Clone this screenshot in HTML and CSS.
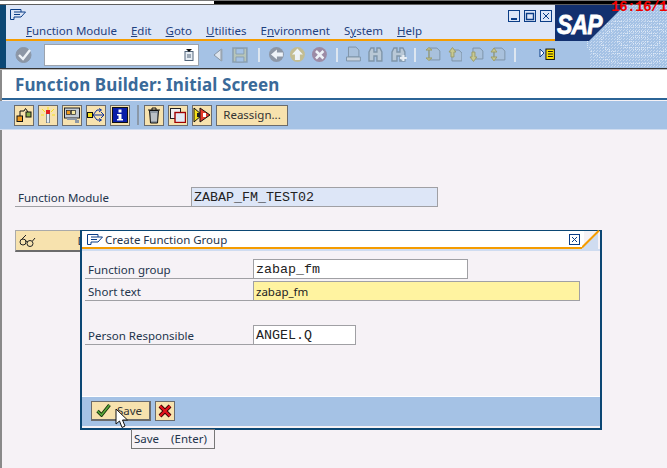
FILE: index.html
```html
<!DOCTYPE html>
<html lang="en">
<head>
<meta charset="utf-8">
<title>Function Builder</title>
<link rel="stylesheet" href="styles.css">
</head>
<body>
<div class="shell">
  <div class="topstrip"></div>
  <header class="header">
    <div class="edge"></div>
    <div class="headmain">
      <div class="menubar">
        <div class="syslogo">
          <svg width="16" height="11" viewBox="0 0 16 11"><path d="M.5.5H11V3H15.5L11 8H4V10.5H.5Z M4 3H11M4 5.5H10" fill="none" stroke="#0a3d86"/></svg>
        </div>
        <nav class="menus">
          <span><u>F</u>unction Module</span><span><u>E</u>dit</span><span><u>G</u>oto</span><span><u>U</u>tilities</span><span>E<u>n</u>vironment</span><span>S<u>y</u>stem</span><span><u>H</u>elp</span>
        </nav>
        <div class="winbtns">
          <span class="winbtn"><svg width="12" height="12" viewBox="0 0 12 12"><path d="M3 9H9" stroke="#0a3d86" stroke-width="2"/></svg></span>
          <span class="winbtn"><svg width="12" height="12" viewBox="0 0 12 12"><path d="M2.5 3.5H9.5V9.5H2.5Z" fill="none" stroke="#0a3d86" stroke-width="1.4"/></svg></span>
          <span class="winbtn"><svg width="12" height="12" viewBox="0 0 12 12"><path d="M3 3L9 9M9 3L3 9" stroke="#0a3d86"/></svg></span>
        </div>
      </div>
      <div class="systoolbar">
        <svg class="t-check" width="18" height="18" viewBox="0 0 18 18"><circle cx="8.5" cy="9" r="7.5" fill="#8d97a6" stroke="#8a97a8"/><path d="M4 9L8 13L15 4" fill="none" stroke="#eef3f8" stroke-width="2.4"/></svg>
        <div class="cmdfield">
          <svg width="10" height="12" viewBox="0 0 10 12"><rect x="1" y="2.5" width="8" height="9" fill="#e8eef4" stroke="#52657a"/><path d="M2 0H8L5 3Z" fill="#111"/><path d="M3 6H7M3 8H7" stroke="#52657a"/></svg>
        </div>
        <svg class="t-tri" width="10" height="14" viewBox="0 0 10 14"><path d="M8.5 1V13L1 7Z" fill="#dfe6ee" stroke="#8795a5"/><path d="M8.5 1V13" stroke="#9aa6b2" stroke-width="2"/></svg>
        <svg class="t-save" width="16" height="16" viewBox="0 0 16 16"><path d="M1 1H15V15H1Z" fill="#b7c5b9" stroke="#8aa0b2" stroke-width="1.6"/><path d="M4 1.5H12V7H4ZM4 10H12V15H4Z" fill="#a5c2e5" stroke="#8aa0b2"/></svg>
        <i class="sep"></i>
        <svg class="t-circ" width="17" height="17" viewBox="0 0 17 17"><circle cx="8.5" cy="8.5" r="7.5" fill="#8d97a6"/><path d="M3 8.5L9 3.5V6.5H15V10.5H9V13.5Z" fill="#eef3f8"/></svg>
        <svg class="t-circ" width="17" height="17" viewBox="0 0 17 17"><circle cx="8.5" cy="8.5" r="7.5" fill="#c3bd92"/><path d="M8.5 2.5L14 8.5H11V14H6V8.5H3Z" fill="#eef3f8"/></svg>
        <svg class="t-circ" width="17" height="17" viewBox="0 0 17 17"><circle cx="8.5" cy="8.5" r="7.5" fill="#9c8ba5"/><path d="M5 5L12.5 12.5M12.5 5L5 12.5" stroke="#eef3f8" stroke-width="2.6"/></svg>
        <i class="sep sep2"></i>
        <svg class="t-print" width="15" height="17" viewBox="0 0 15 17"><path d="M2.5 1H10L13 4V11H2.5Z" fill="#a9c1dc" stroke="#7f95a9"/><path d="M.5 11H14.500V15H.5Z" fill="#c6d0db" stroke="#7f95a9"/></svg>
        <svg class="t-find" width="15" height="15" viewBox="0 0 15 15"><path d="M1 5L3 1H6V5H9V1H12L14 5V14H9V9H6V14H1Z" fill="#b9c8d6" stroke="#7f95a9" stroke-width="1.4"/></svg>
        <svg class="t-findn" width="16" height="15" viewBox="0 0 16 15"><path d="M1 5L3 1H6V5H9V1H12L14 5V14H9V9H6V14H1Z" fill="#b9c8d6" stroke="#7f95a9" stroke-width="1.4"/><path d="M9 11H16M12.500 8V14" stroke="#e8eef4" stroke-width="2.2"/></svg>
        <i class="sep sep3"></i>
        <svg class="t-page" width="16" height="15" viewBox="0 0 16 15"><path d="M4 1H12L15 4V13H4Z" fill="#a9c1dc" stroke="#7f95a9"/><path d="M1 3L4 0.500L7 3H1ZM1 11L4 13.500L7 11H1Z M4 3V11" fill="#c8c98f" stroke="#9b9d6c"/></svg>
        <svg class="t-page2" width="15" height="15" viewBox="0 0 15 15"><path d="M4 3H11L14 6V14H4Z" fill="#a9c1dc" stroke="#7f95a9"/><path d="M1 5L4.500 0.500L8 5H6V10H3V5Z" fill="#c8c98f" stroke="#9b9d6c"/></svg>
        <svg class="t-page3" width="15" height="15" viewBox="0 0 15 15"><path d="M4 1H11L14 4V12H4Z" fill="#a9c1dc" stroke="#7f95a9"/><path d="M1 10L4.500 14.500L8 10H6V5H3V10Z" fill="#c8c98f" stroke="#9b9d6c"/></svg>
        <svg class="t-page4" width="16" height="15" viewBox="0 0 16 15"><path d="M4 1H12L15 4V13H4Z" fill="#a9c1dc" stroke="#7f95a9"/><path d="M1 5L4 1L7 5H1ZM1 10L4 14L7 10H1Z M4 5V10" fill="#c8c98f" stroke="#9b9d6c"/></svg>
        <i class="sep sep4"></i>
        <svg class="t-layout" width="16" height="12" viewBox="0 0 16 12"><path d="M1 1V9L5 5Z" fill="#fff" stroke="#0a3d86"/><rect x="7" y="1" width="8.500" height="10.500" fill="#ffe400" stroke="#111"/><path d="M9 3.500H14M9 6H14M9 8.500H14" stroke="#111"/></svg>
      </div>
    </div>
    <div class="saplogo">
      <svg width="112" height="63" viewBox="0 0 112 63">
        <defs>
          <pattern id="dots" width="2" height="2" patternUnits="userSpaceOnUse"><rect width="1" height="1" fill="#dce8f6"/></pattern>
          <pattern id="dots2" width="3" height="3" patternUnits="userSpaceOnUse"><rect width="1" height="1" fill="#c9daf0"/><rect x="2" y="1" width="1" height="1" fill="#c9daf0"/></pattern>
        </defs>
        <rect width="112" height="63" fill="#a5c2e5"/>
        <path d="M70 0H112V63H34V36Z" fill="url(#dots2)"/>
        <g fill="none" stroke="url(#dots)">
          <ellipse cx="84" cy="35" rx="9" ry="3.500" stroke-width="3"/>
          <ellipse cx="84" cy="35" rx="21" ry="8.500" stroke-width="3"/>
          <ellipse cx="82" cy="36" rx="36" ry="15" stroke-width="3"/>
          <ellipse cx="80" cy="37" rx="48" ry="22" stroke-width="2"/>
        </g>
        <path d="M0 0H70L34 36H0Z" fill="#12306f"/>
        <text x="0" y="0" transform="translate(2 29) scale(.82 1)" class="saptext">SAP</text>
      </svg>
    </div>
  </header>
  <div class="divider"></div>
  <main class="screen">
    <h1 class="pagetitle">Function Builder: Initial Screen</h1>
    <div class="apptoolbar">
      <button class="ibtn"><svg width="16" height="16" viewBox="0 0 16 16"><rect x="1" y="9" width="5.500" height="5.500" fill="#f09a1e" stroke="#111"/><rect x="10" y="5" width="5" height="5" fill="#8ab04a" stroke="#111"/><path d="M4 9V4H8L9.500 1.500L12 5" fill="none" stroke="#111"/></svg></button>
      <button class="ibtn"><svg width="16" height="16" viewBox="0 0 16 16"><path d="M8 0V3M2 2L5 5M14 2L11 5M1 8H4M15 8H12" stroke="#f4e11b"/><rect x="6.500" y="6" width="3" height="10" fill="#e8eef4" stroke="#52657a" stroke-width=".7"/><rect x="6" y="3" width="4" height="4" fill="#e02020"/></svg></button>
      <button class="ibtn"><svg width="16" height="16" viewBox="0 0 16 16"><rect x="0.500" y="1" width="15" height="10" fill="#c3ccd6" stroke="#222"/><rect x="2.500" y="3.500" width="4" height="4" fill="#f09a1e" stroke="#222" stroke-width=".7"/><rect x="7.500" y="3.500" width="4" height="4" fill="#f4e6a0" stroke="#222" stroke-width=".7"/><path d="M3 13H13V11H3Z" fill="#8e98a4"/><rect x="11" y="13" width="4" height="3" fill="#8e98a4"/></svg></button>
      <button class="ibtn"><svg width="18" height="16" viewBox="0 0 18 16"><rect x="0.500" y="5.500" width="5" height="5" fill="#f4e11b" stroke="#111"/><path d="M6 8H17M14 5L17 8L14 11M6 8L10 3H14M6 8L10 13H14M12 1.500L14.500 3L12 5M12 11.500L14.500 13L12 14.500" fill="none" stroke="#0a2f9c"/></svg></button>
      <button class="ibtn"><svg width="16" height="16" viewBox="0 0 16 16"><rect x="0.500" y="0.500" width="15" height="15" fill="#0a1ea8" stroke="#111"/><rect x="6.500" y="2.500" width="3" height="3" fill="#fff"/><path d="M5 7H9.500V12H11V13.500H5V12H6.500V8.500H5Z" fill="#fff"/></svg></button>
      <i class="appsep"></i>
      <button class="ibtn"><svg width="14" height="17" viewBox="0 0 14 17"><path d="M1 3H13M5 3V1H9V3" fill="none" stroke="#111"/><path d="M2.500 3.500H11.500L10.500 16H3.500Z" fill="#8f99a6" stroke="#111"/><path d="M5 6V14M7 6V14M9 6V14" stroke="#e6e6e6"/></svg></button>
      <button class="ibtn"><svg width="16" height="15" viewBox="0 0 16 15"><rect x="0.500" y="0.500" width="10" height="10" fill="#f0f0f0" stroke="#222"/><rect x="5" y="4.500" width="10.500" height="10" fill="#e2eaf4" stroke="#a00000" stroke-width="1.400"/></svg></button>
      <button class="ibtn"><svg width="18" height="16" viewBox="0 0 18 16"><path d="M1 1L9 8L1 15Z" fill="#f4e11b" stroke="#111"/><path d="M7 1L17 8L7 15Z" fill="#e53a2a" stroke="#111"/><rect x="4" y="6" width="3" height="4" fill="#222"/><rect x="10" y="6" width="3" height="4" fill="#fff"/></svg></button>
      <button class="tbtn">Reassign...</button>
    </div>
    <div class="row mainrow">
      <label class="lbl lblmain">Function Module</label>
      <div class="input mainfield">ZABAP_FM_TEST02</div>
    </div>
    <div class="behindbtn">
      <svg width="17" height="13" viewBox="0 0 17 13"><g fill="none" stroke="#222"><circle cx="4" cy="8" r="3"/><circle cx="11" cy="9.500" r="3"/><path d="M6.500 7L8.500 7.500M1.500 6.500L7 1M13.500 7L16 4"/></g></svg>
      <span class="behindchar">D</span>
    </div>
  </main>

  <section class="dialog">
    <div class="dtitle">
      <svg width="16" height="11" viewBox="0 0 16 11"><path d="M.5.5H11V3H15.5L11 8H4V10.5H.5Z M4 3H11M4 5.500H10" fill="none" stroke="#0a3d86"/></svg>
      <span class="dtitletext">Create Function Group</span>
      <span class="dclose"><svg width="11" height="11" viewBox="0 0 11 11"><path d="M3 3L8 8M8 3L3 8" stroke="#0a3d86"/></svg></span>
      <svg class="dcorner" width="18" height="20" viewBox="0 0 18 20"><path d="M0 17.500L16 1V20H0Z" fill="#cfdcf0"/><path d="M0 17.500L17 0.500" stroke="#f59c00" stroke-width="2"/></svg>
    </div>
    <div class="dbody">
      <div class="row">
        <label class="lbl lbldlg">Function group</label>
        <div class="input fg">zabap_fm</div>
      </div>
      <div class="row">
        <label class="lbl lbldlg">Short text</label>
        <div class="input st">zabap_fm</div>
      </div>
      <div class="row rowgap">
        <label class="lbl lbldlg">Person Responsible</label>
        <div class="input pr">ANGEL.Q</div>
      </div>
    </div>
    <div class="dfoot">
      <button class="savebtn"><svg width="15" height="14" viewBox="0 0 15 14"><path d="M1.500 8L5.500 12L13.500 2" fill="none" stroke="#14310c" stroke-width="3.400"/><path d="M1.500 8L5.500 12L13.500 2" fill="none" stroke="#5aa83a" stroke-width="1.600"/></svg><span>Save</span></button>
      <button class="cancelbtn"><svg width="14" height="14" viewBox="0 0 14 14"><path d="M2 2L12 12M12 2L2 12" stroke="#300" stroke-width="4"/><path d="M2 2L12 12M12 2L2 12" stroke="#e4121c" stroke-width="2.400"/></svg></button>
    </div>
  </section>

  <div class="tooltip">Save    (Enter)</div>
  <svg class="cursor" width="14" height="21" viewBox="0 0 14 21"><path d="M1 1V16L4.500 13L7 19.500L10 18L7.500 12H12.500Z" fill="#fff" stroke="#111"/></svg>
  <div class="clock">16:16/1</div>
</div>
</body>
</html>
```

FILE: styles.css
```css
* { box-sizing: border-box; }
html, body { margin: 0; padding: 0; }
body { font-family: "Noto Sans", "Liberation Sans", sans-serif; font-size: 11.5px; color: #23344c; }
.shell { position: relative; width: 667px; height: 468px; overflow: hidden; background: #f6f2f6; display: flex; flex-direction: column; }
.topstrip { height: 5px; flex: none; border-bottom: 1px solid #5f5f5f; background: linear-gradient(90deg, #fff 0 214px, #000 214px); border-top: 1px solid #777; }
.header { height: 63px; display: flex; flex: none; }
.edge { width: 6px; background: #0b4774; }
.headmain { flex: 1; display: flex; flex-direction: column; min-width: 0; }
.menubar { height: 36px; background: #dde6f7; border-bottom: 2px solid #f59c00; position: relative; display: flex; flex-direction: column; }
.syslogo { height: 18px; padding: 4px 0 0 4px; }
.syslogo svg, .dtitle svg { display: block; }
.menus { display: flex; gap: 14px; padding-left: 20px; color: #1f4180; height: 16px; line-height: 16px; }
.menus span { white-space: nowrap; }
.winbtns { position: absolute; right: 3px; top: 5px; display: flex; gap: 4px; }
.winbtn { width: 12px; height: 12px; border: 1px solid #0a3d86; display: flex; align-items: center; justify-content: center; }
.winbtn svg { margin: -1px; flex: none; }
.systoolbar { flex: 1; background: #a5c2e5; display: flex; align-items: center; padding-left: 9px; }
.t-check { flex: none; }
.cmdfield { width: 156px; height: 22px; margin-left: 11px; background: #fff; border: 1px solid #9ca3ad; display: flex; justify-content: flex-end; align-items: center; padding-right: 4px; }
.t-tri { margin-left: 14px; }
.t-save { margin-left: 9px; }
.sep { width: 2px; height: 14px; background: #dde6f0; margin: 0 8px 0 10px; flex: none; }
.t-circ { margin-right: 5px; }
.sep2 { margin: 0 8px 0 3px; }
.t-find { margin-left: 7px; }
.t-findn { margin-left: 8px; }
.sep3 { margin: 0 9px 0 7px; }
.t-page2 { margin-left: 7px; }
.t-page3 { margin-left: 7px; }
.t-page4 { margin-left: 6px; }
.sep4 { margin: 0 0 0 8px; }
.t-layout { margin-left: 23px; margin-top: -1px; }
.saplogo { width: 112px; flex: none; margin-left: 0; }
.saplogo svg { display: block; }
.saptext { font-family: "Liberation Sans", sans-serif; font-weight: 700; font-style: italic; font-size: 28px; fill: #fff; stroke: #fff; stroke-width: .8px; letter-spacing: -1px; }
.divider { height: 2px; flex: none; background: #333; border-bottom: 1px solid #bbb; }
.screen { flex: 1; position: relative; border-left: 2px solid #8a8a8a; background: #f6f2f6; padding-top: 0; }
.pagetitle { margin: 0; height: 30px; background: #fff; border-bottom: 2px solid #2b6496; padding-left: 13px; font: 700 17px/30px "Noto Sans", "Liberation Sans", sans-serif; letter-spacing: .12px; color: #3a6a99; white-space: nowrap; }
.apptoolbar { height: 29px; margin-top: 1px; background: #a5c2e5; border-bottom: 1px solid #cfdcf0; display: flex; align-items: center; gap: 4px; margin-left: -2px; padding-left: 14px; }
button { font: inherit; padding: 0; margin: 0; cursor: default; }
.ibtn { width: 20px; height: 21px; background: #f7e2ae; border: 1px solid #6b6b6b; display: flex; align-items: center; justify-content: center; }
.appsep { width: 2px; height: 20px; background: #8a98a8; margin: 0 1px 0 3px; flex: none; }
.tbtn { width: 72px; height: 21px; background: #f7e2ae; border: 1px solid #6b6b6b; color: #333; line-height: 18px; }
.row { display: flex; align-items: flex-end; }
.mainrow { margin: 57px 0 0 13px; }
.lbl { display: block; border-bottom: 1px solid #a0a0a4; color: #23344c; height: 20px; line-height: 21px; white-space: nowrap; }
.lblmain { width: 176px; padding-left: 3px; }
.lbldlg { width: 168px; padding-left: 3px; }
.input { height: 20px; border: 1px solid #a0a0a4; font-family: "Liberation Mono", monospace; font-size: 13.33px; line-height: 19px; padding-left: 2px; color: #222; background: #fff; white-space: nowrap; }
.mainfield { width: 247px; background: #dde6f7; }
.behindbtn { width: 66px; height: 22px; margin: 23px 0 0 13px; background: #f7e2ae; border: 1px solid #aaa; border-right: 0; border-bottom: 2px solid #6b6b6b; display: flex; align-items: center; padding-left: 3px; }
.behindchar { margin-left: auto; margin-right: -5px; color: #23344c; }

/* floating dialog window */
.dialog { position: absolute; left: 80px; top: 230px; width: 522px; height: 200px; background: #f6f2f6; border: 2px solid #0b4774; border-top-width: 1px; display: flex; flex-direction: column; }
.dtitle { height: 18px; flex: none; background: #fff; border-bottom: 2px solid #f59c00; display: flex; align-items: center; padding-left: 5px; position: relative; margin-right: 16px; }
.dtitletext { margin-left: 2px; color: #23344c; }
.dclose { margin-left: auto; margin-right: 4px; width: 11px; height: 11px; border: 1px solid #0a3d86; display: flex; align-items: center; justify-content: center; }
.dclose svg { flex: none; margin: -1px; }
.dcorner { position: absolute; right: -16px; top: -1px; }
.dbody { flex: 1; border-top: 2px solid #cfdcf0; padding: 8px 0 0 3px; display: flex; flex-direction: column; gap: 2px; }
.rowgap { margin-top: 22px; }
.fg { width: 215px; }
.st { width: 327px; background: #fff3a0; font-family: "Noto Sans", "Liberation Sans", sans-serif; font-size: 11.5px; padding-left: 2px; }
.pr { width: 103px; }
.dfoot { height: 30px; flex: none; border-top: 1px solid #fff; background: #a5c2e5; display: flex; align-items: center; gap: 4px; padding: 0 0 2px 9px; margin-bottom: 2px; }
.savebtn { width: 60px; height: 20px; background: #f7e2ae; border: 1px solid #6b6b6b; border-right-width: 2px; border-bottom-width: 2px; display: flex; align-items: center; padding-left: 4px; gap: 6px; color: #333; }
.cancelbtn { width: 20px; height: 20px; background: #f7e2ae; border: 1px solid #6b6b6b; display: flex; align-items: center; justify-content: center; }
.tooltip { position: absolute; left: 131px; top: 429px; width: 84px; height: 20px; background: #f6f2f6; border: 1px solid #777; padding-left: 2px; line-height: 18px; white-space: pre; color: #23344c; }
.cursor { position: absolute; left: 115px; top: 408px; }
.clock { position: absolute; left: 611px; top: 0; color: #f00000; font: 700 14.5px/14px "Liberation Mono", monospace; letter-spacing: -.7px; white-space: nowrap; }
```
